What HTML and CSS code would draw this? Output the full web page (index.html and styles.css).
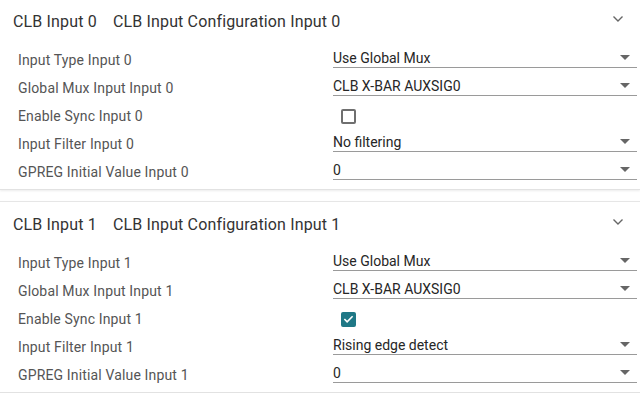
FILE: index.html
```html
<!DOCTYPE html>
<html lang="en">
<head>
    <meta charset="UTF-8">
    <meta name="viewport" content="width=device-width, initial-scale=1.0">
    <title>CLB Inputs</title>
    <link rel="stylesheet" href="styles.css">
</head>
<body>
    <div class="page">
        <section class="card">
            <div class="card-header">
                <div class="card-title">
                    <span>CLB Input 0</span>
                    <span class="card-desc">CLB Input Configuration Input 0</span>
                </div>
                <svg class="chevron" width="12" height="8" viewBox="0 0 12 8">
                    <polyline points="1.5,1.5 6,6 10.5,1.5" fill="none" stroke="#666" stroke-width="1.4"/>
                </svg>
            </div>
            <div class="row">
                <label class="label">Input Type Input 0</label>
                <div class="select"><span>Use Global Mux</span><i class="arrow"></i></div>
            </div>
            <div class="row">
                <label class="label">Global Mux Input Input 0</label>
                <div class="select"><span>CLB X-BAR AUXSIG0</span><i class="arrow"></i></div>
            </div>
            <div class="row">
                <label class="label">Enable Sync Input 0</label>
                <div class="check-wrap"><span class="checkbox"></span></div>
            </div>
            <div class="row">
                <label class="label">Input Filter Input 0</label>
                <div class="select"><span>No filtering</span><i class="arrow"></i></div>
            </div>
            <div class="row">
                <label class="label">GPREG Initial Value Input 0</label>
                <div class="select"><span>0</span><i class="arrow"></i></div>
            </div>
        </section>

        <section class="card">
            <div class="card-header">
                <div class="card-title">
                    <span>CLB Input 1</span>
                    <span class="card-desc">CLB Input Configuration Input 1</span>
                </div>
                <svg class="chevron" width="12" height="8" viewBox="0 0 12 8">
                    <polyline points="1.5,1.5 6,6 10.5,1.5" fill="none" stroke="#666" stroke-width="1.4"/>
                </svg>
            </div>
            <div class="row">
                <label class="label">Input Type Input 1</label>
                <div class="select"><span>Use Global Mux</span><i class="arrow"></i></div>
            </div>
            <div class="row">
                <label class="label">Global Mux Input Input 1</label>
                <div class="select"><span>CLB X-BAR AUXSIG0</span><i class="arrow"></i></div>
            </div>
            <div class="row">
                <label class="label">Enable Sync Input 1</label>
                <div class="check-wrap">
                    <span class="checkbox checked">
                        <svg width="12" height="10" viewBox="0 0 12 10">
                            <polyline points="1.5,5 4.5,8 10.5,2" fill="none" stroke="#fff" stroke-width="1.8"/>
                        </svg>
                    </span>
                </div>
            </div>
            <div class="row">
                <label class="label">Input Filter Input 1</label>
                <div class="select"><span>Rising edge detect</span><i class="arrow"></i></div>
            </div>
            <div class="row">
                <label class="label">GPREG Initial Value Input 1</label>
                <div class="select"><span>0</span><i class="arrow"></i></div>
            </div>
        </section>
    </div>
</body>
</html>
```

FILE: styles.css
```css
body {
    font-family: Roboto, "Noto Sans", sans-serif;
    margin: 0;
    padding: 0;
    background-color: #fff;
    overflow: hidden;
}

.page {
    margin-top: -2px;
    display: flex;
    flex-direction: column;
    gap: 11px;
}

.card {
    background-color: #fff;
    border-bottom: 1px solid #e2e2e2;
    border-top: 1px solid #e6e6e6;
    box-shadow: 0 1px 2px rgba(0, 0, 0, 0.08);
    height: 192px;
    box-sizing: border-box;
}

.card-header {
    height: 47px;
    padding: 0 16px 2px 13px;
    display: flex;
    align-items: center;
    justify-content: space-between;
    box-sizing: border-box;
}

.card-title {
    font-size: 16px;
    letter-spacing: 0.15px;
    color: #333;
}

.card-desc {
    margin-left: 12px;
}

.chevron {
    margin-top: -6px;
}

.row {
    height: 28px;
    display: flex;
    align-items: center;
    padding-left: 18px;
    padding-right: 3px;
}

.label {
    width: 315px;
    font-size: 14px;
    letter-spacing: 0.15px;
    color: #555;
}

.select {
    flex: 1;
    height: 18px;
    margin-top: -4px;
    border-bottom: 1px solid #9a9a9a;
    display: flex;
    align-items: center;
    justify-content: space-between;
    font-size: 14px;
    color: #262626;
}

.arrow {
    width: 0;
    height: 0;
    border-left: 5px solid transparent;
    border-right: 5px solid transparent;
    border-top: 5px solid #666;
    margin-right: 7px;
}

.check-wrap {
    flex: 1;
    display: flex;
    align-items: center;
}

.checkbox {
    margin-left: 8px;
    width: 15px;
    height: 15px;
    box-sizing: border-box;
    border: 2px solid #6f6f6f;
    border-radius: 2px;
    display: flex;
    align-items: center;
    justify-content: center;
}

.checkbox.checked {
    background-color: #1f7886;
    border-color: #1f7886;
}
```
